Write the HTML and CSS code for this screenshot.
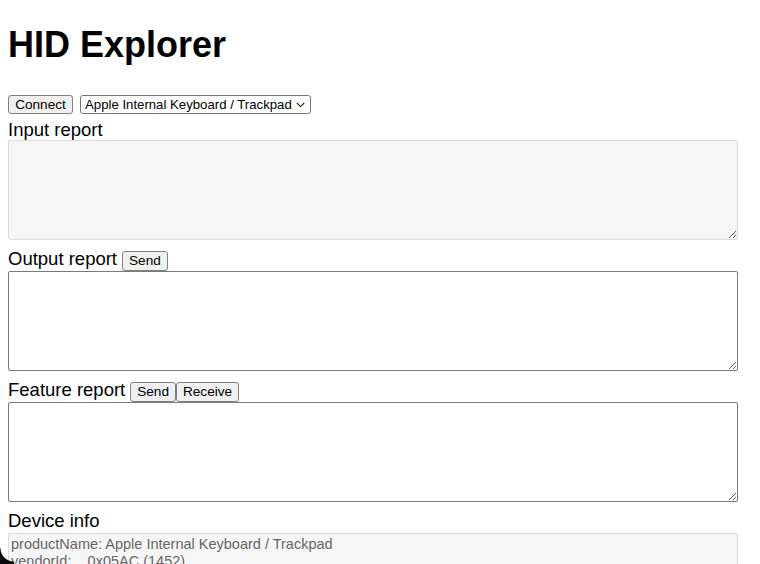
FILE: index.html
```html
<!DOCTYPE html>
<html lang="en">
<head>
<meta charset="utf-8">
<title>HID Explorer</title>
<link rel="stylesheet" href="styles.css">
</head>
<body>
<div class="page">
  <h1 class="title">HID Explorer</h1>
  <div class="controls">
    <button class="btn">Connect</button>
    <div class="select-wrap">
      <select class="device-select">
        <option>Apple Internal Keyboard / Trackpad</option>
      </select>
      <svg class="chevron" width="9" height="6" viewBox="0 0 9 6"><path d="M0.8 1 L4.5 4.6 L8.2 1" fill="none" stroke="#222" stroke-width="1.1"/></svg>
    </div>
  </div>
  <div class="label-row first">Input report</div>
  <textarea class="report readonly" readonly></textarea>
  <div class="label-row">Output report <span class="btns"><button class="btn">Send</button></span></div>
  <textarea class="report"></textarea>
  <div class="label-row">Feature report <span class="btns"><button class="btn">Send</button><button class="btn">Receive</button></span></div>
  <textarea class="report"></textarea>
  <div class="label-row">Device info</div>
  <textarea class="report readonly info" readonly>productName: Apple Internal Keyboard / Trackpad
vendorId:    0x05AC (1452)
productId:   0x027E (638)
opened:      false
collections: 4</textarea>
</div>
<div class="corner"></div>
</body>
</html>
```
FILE: styles.css
```css
html, body {
  margin: 0;
  padding: 0;
  background: #ffffff;
}
.page {
  padding: 24px 8px 20px;
  font-family: "Liberation Sans", Arial, sans-serif;
  font-size: 18.5px;
  color: #000;
}
.title {
  margin: 0 0 29px;
  font-size: 36px;
  line-height: 41px;
  font-weight: bold;
  height: 41px;
}
.controls {
  display: flex;
  align-items: center;
  gap: 7px;
  height: 20px;
}
.btn {
  font-family: "Liberation Sans", Arial, sans-serif;
  font-size: 13.6px;
  line-height: 16px;
  padding: 1px 6px;
  margin: 0;
  border: 1px solid #808080;
  border-radius: 3px;
  background: #f0f0f0;
  color: #000;
  height: 20px;
  box-sizing: border-box;
}
.controls .btn {
  width: 65px;
  padding: 1px 0;
  height: 19px;
  line-height: 15px;
}
.select-wrap {
  position: relative;
  display: flex;
}
.device-select {
  -webkit-appearance: none;
  appearance: none;
  font-family: "Liberation Sans", Arial, sans-serif;
  font-size: 13.2px;
  width: 231px;
  height: 19px;
  box-sizing: border-box;
  padding: 0 10px 0 4px;
  border: 1px solid #767676;
  border-radius: 3px;
  background: #fff;
  color: #000;
  line-height: 17px;
}
.chevron {
  position: absolute;
  right: 6px;
  top: 7px;
  pointer-events: none;
}
.label-row {
  display: flex;
  align-items: baseline;
  height: 31px;
  box-sizing: border-box;
  padding-top: 8px;
  line-height: 21px;
}
.label-row.first {
  height: 26px;
  padding-top: 5px;
}
.btns {
  display: flex;
  margin-left: 5px;
}
.report {
  display: block;
  width: 730px;
  height: 100px;
  box-sizing: border-box;
  margin: 0;
  border: 1px solid #7a7a7a;
  border-radius: 2px;
  background: #fff;
  padding: 2px;
  font-family: "Liberation Sans", Arial, sans-serif;
  font-size: 14.5px;
  line-height: 16.6px;
  color: #6d6d6d;
  resize: both;
}
.report.readonly {
  background: #f6f6f6;
  border-color: #dcdcdc;
}
.report.info {
  color: #666666;
}
.corner {
  position: fixed;
  left: 0;
  bottom: 0;
  width: 14px;
  height: 16px;
  background: radial-gradient(circle at 100% 0, transparent 13px, #0a0a0a 14px);
  pointer-events: none;
}
```
